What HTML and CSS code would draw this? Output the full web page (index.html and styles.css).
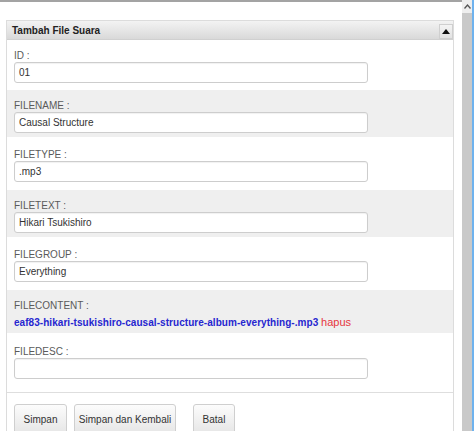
FILE: index.html
```html
<!DOCTYPE html>
<html>
<head>
<meta charset="utf-8">
<link rel="stylesheet" href="styles.css">
</head>
<body>
<div class="page">
  <div class="main">
    <div class="topbar"></div>
    <div class="panel">
      <div class="panel-head">
        <span class="panel-title">Tambah File Suara</span>
        <span class="collapse"><svg width="8" height="5" viewBox="0 0 8 5"><polygon points="0,5 8,5 4,0" fill="#111"/></svg></span>
      </div>
      <div class="row first">
        <div class="label">ID :</div>
        <div class="input">01</div>
      </div>
      <div class="row alt">
        <div class="label">FILENAME :</div>
        <div class="input">Causal Structure</div>
      </div>
      <div class="row">
        <div class="label">FILETYPE :</div>
        <div class="input">.mp3</div>
      </div>
      <div class="row alt">
        <div class="label">FILETEXT :</div>
        <div class="input">Hikari Tsukishiro</div>
      </div>
      <div class="row group">
        <div class="label">FILEGROUP :</div>
        <div class="input">Everything</div>
      </div>
      <div class="row alt content">
        <div class="label">FILECONTENT :</div>
        <div class="file-line"><a class="file-link">eaf83-hikari-tsukishiro-causal-structure-album-everything-.mp3</a> <a class="remove">hapus</a></div>
      </div>
      <div class="row last">
        <div class="label">FILEDESC :</div>
        <div class="input"></div>
      </div>
      <div class="actions">
        <button class="btn btn-save">Simpan</button>
        <button class="btn btn-back">Simpan dan Kembali</button>
        <button class="btn btn-cancel">Batal</button>
      </div>
    </div>
  </div>
  <div class="scrollbar">
    <div class="scroll-up"><svg width="7" height="5" viewBox="0 0 7 5"><polyline points="0.5,4.5 3.5,1 6.5,4.5" fill="none" stroke="#555" stroke-width="1.3"/></svg></div>
    <div class="scroll-track"></div>
  </div>
  <div class="edge"></div>
</div>
</body>
</html>
```
FILE: styles.css
```css
html, body {
  margin: 0;
  padding: 0;
  background: #fff;
  overflow: hidden;
}
body {
  font-family: "Liberation Sans", Arial, sans-serif;
  font-size: 10px;
  color: #333;
}
.page {
  display: flex;
  height: 431px;
  overflow: hidden;
}
.main {
  width: 462px;
  flex: none;
}
.topbar {
  height: 2px;
  background: #a3a3a3;
}
.panel {
  margin: 18px 8px 0 6px;
  border: 1px solid #dcdcdc;
  border-bottom: none;
  height: 420px;
}
.panel-head {
  height: 19px;
  box-sizing: border-box;
  display: flex;
  align-items: center;
  justify-content: space-between;
  padding: 0 0 0 5px;
  background: linear-gradient(#f3f3f3, #d9d9d9);
  border-bottom: 1px solid #d0d0d0;
}
.panel-title {
  font-weight: bold;
  color: #222;
  font-size: 10px;
}
.collapse {
  width: 14px;
  height: 15px;
  box-sizing: border-box;
  border: 1px solid #cfcfcf;
  background: linear-gradient(#f4f4f4, #e2e2e2);
  display: flex;
  align-items: center;
  justify-content: center;
  margin-top: 3px;
}
.row {
  padding: 11px 7px 8px;
  background: #fff;
}
.row.first {
  padding: 9px 7px 7px;
}
.row.group {
  padding: 11px 7px 8px;
}
.row.alt {
  background: #efefef;
  padding: 9px 7px 4px;
}
.row.content {
  padding: 9px 7px 0;
}
.row.last {
  padding: 12px 7px 13px;
  border-bottom: 1px solid #dedede;
}
.label {
  line-height: 13px;
  color: #5a5a5a;
}
.input {
  width: 354px;
  height: 21px;
  box-sizing: border-box;
  border: 1px solid #cdcdcd;
  border-radius: 3px;
  background: #fff;
  box-shadow: inset 0 1px 1px rgba(0,0,0,0.06);
  padding: 0 4px;
  line-height: 19px;
  color: #333;
}
.file-line {
  line-height: 20px;
}
.file-link {
  color: #2626d0;
  font-weight: bold;
  letter-spacing: 0.05px;
}
.remove {
  color: #e6363e;
  font-size: 11px;
}
.actions {
  display: flex;
  padding: 11px 7px;
}
.btn {
  height: 30px;
  font-family: "Liberation Sans", Arial, sans-serif;
  font-size: 10px;
  color: #333;
  border: 1px solid #cfcfcf;
  border-radius: 3px;
  background: linear-gradient(#fcfcfc, #e6e6e6);
  padding: 0;
  text-align: center;
}
.btn-save {
  width: 53px;
}
.btn-back {
  width: 102px;
  margin-left: 7px;
}
.btn-cancel {
  width: 42px;
  margin-left: 17px;
}
.scrollbar {
  width: 10px;
  flex: none;
  display: flex;
  flex-direction: column;
  background: #cacaca;
}
.scroll-up {
  height: 13px;
  background: #eeeeee;
  display: flex;
  align-items: center;
  justify-content: center;
}
.scroll-track {
  flex: 1;
  background: #c9c9c9;
}
.edge {
  width: 2px;
  flex: none;
  background: #6eb2ee;
}
```
